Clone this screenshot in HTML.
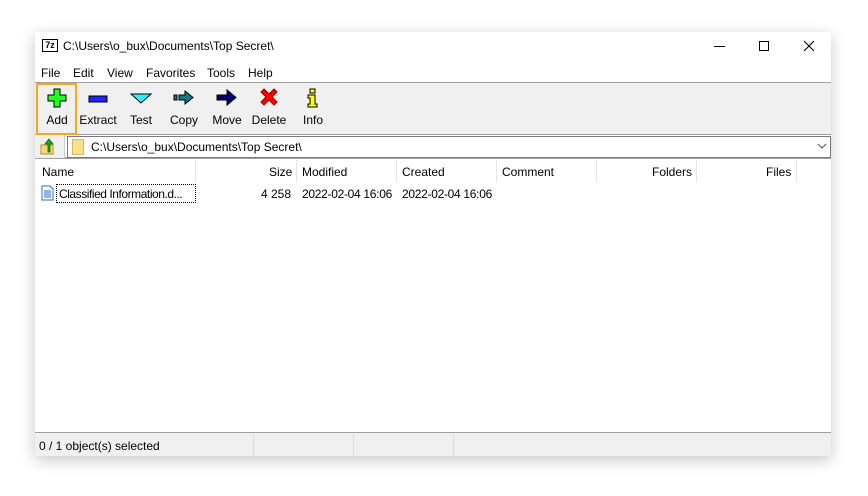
<!DOCTYPE html>
<html><head><meta charset="utf-8"><style>
*{margin:0;padding:0;box-sizing:border-box}
body{width:868px;height:496px;background:#fff;font-family:"Liberation Sans",sans-serif;font-size:12px;color:#000;position:relative;overflow:hidden;white-space:nowrap}
.win{position:absolute;left:35px;top:32px;width:796px;height:424px;background:#fff;box-shadow:0 4px 14px rgba(0,0,0,0.22)}
.abs{position:absolute}
.menu span{position:absolute;top:34px}
.tb{position:absolute;left:0;top:50px;width:796px;height:53px;background:#f0f0f0;border-top:1px solid #a0a0a0;border-bottom:1px solid #a0a0a0}
.btn{position:absolute;top:0;text-align:center;height:50px}
.btn svg{position:absolute;top:5px}
.btn span{position:absolute;top:30px;left:-5px;right:-5px;text-align:center}
.hdr span{position:absolute;top:133px}
.sep{position:absolute;top:128px;width:1px;height:22px;background:#e5e5e5}
</style></head><body>
<div class="win">
 <div class="abs" style="left:7px;top:7px;width:16px;height:13px;border:1.5px solid #000;font:bold 9px 'Liberation Sans',sans-serif;line-height:10px;text-align:center">7z</div>
 <div class="abs" style="left:28px;top:7px">C:\Users\o_bux\Documents\Top Secret\</div>
 <div class="abs" style="left:679px;top:14px;width:11px;height:1px;background:#000"></div>
 <div class="abs" style="left:724px;top:9px;width:10px;height:10px;border:1px solid #000"></div>
 <svg class="abs" style="left:768px;top:8px" width="12" height="12"><path d="M1 1L11 11M11 1L1 11" stroke="#000" stroke-width="1.1"/></svg>
 <div class="menu"><span style="left:6px">File</span><span style="left:38px">Edit</span><span style="left:72px">View</span><span style="left:111px">Favorites</span><span style="left:172px">Tools</span><span style="left:213px">Help</span></div>
 <div class="tb">
  <div class="abs" style="left:1px;top:0px;width:41px;height:52px;border:2px solid #f5a81c"></div>
  <div class="btn" style="left:2px;width:40px"><svg style="left:10px" width="20" height="20"><path d="M7 1h6v6h6v6h-6v6H7v-6H1V7h6z" fill="#2f2" stroke="#000" stroke-width="1"/></svg><span>Add</span></div>
  <div class="btn" style="left:43px;width:40px"><svg style="left:10px" width="20" height="20"><rect x="1" y="8" width="18" height="6" fill="#22f" stroke="#000"/></svg><span>Extract</span></div>
  <div class="btn" style="left:86px;width:40px"><svg style="left:9px" width="22" height="20"><path d="M1 6h20l-10 9z" fill="#3ef" stroke="#000"/></svg><span>Test</span></div>
  <div class="btn" style="left:129px;width:40px"><svg style="left:9px" width="22" height="20"><path d="M1 7h3v5H1zM6 7h6V3l8 6.5-8 6.5v-4H6z" fill="#178" stroke="#000"/></svg><span>Copy</span></div>
  <div class="btn" style="left:172px;width:40px"><svg style="left:9px" width="22" height="20"><path d="M1 7h10V2l9 7.5-9 7.5v-5H1z" fill="#006" stroke="#000"/></svg><span>Move</span></div>
  <div class="btn" style="left:214px;width:40px"><svg style="left:10px" width="20" height="20"><path d="M2 4l3-3 5 5 5-5 3 3-5 5 5 5-3 3-5-5-5 5-3-3 5-5z" fill="#f00" stroke="#900"/></svg><span>Delete</span></div>
  <div class="btn" style="left:258px;width:40px"><svg style="left:13px" width="14" height="20"><rect x="4" y="1" width="5" height="4" fill="#ff0" stroke="#000"/><path d="M2 7h7v9h2v3H2v-3h2v-6H2z" fill="#ff0" stroke="#000"/></svg><span>Info</span></div>
 </div>
 <div class="abs" style="left:0;top:103px;width:796px;height:24px;background:#fff;border-bottom:2px solid #a0a0a0"></div>
 <div class="abs" style="left:0;top:103px;width:30px;height:23px;background:#f0f0f0;border-right:1px solid #ccc"></div>
 <svg class="abs" style="left:4px;top:105px" width="18" height="18"><path d="M2 8h12v9H2z" fill="#f7d97a" stroke="#b89020"/><path d="M9 15V7H6l4-5 4 5h-3v8z" fill="#2a2" stroke="#060" stroke-width=".8"/></svg>
 <div class="abs" style="left:32px;top:104px;width:764px;height:22px;border:1px solid #7a7a7a;background:#fff"></div>
 <div class="abs" style="left:37px;top:107px;width:12px;height:16px;background:#fbe08a;border:1px solid #d8b860"></div>
 <div class="abs" style="left:56px;top:108px">C:\Users\o_bux\Documents\Top Secret\</div>
 <svg class="abs" style="left:782px;top:111px" width="10" height="6"><path d="M1 1l4 4 4-4" fill="none" stroke="#555"/></svg>
 <div class="hdr"><span style="left:7px">Name</span><span style="left:234px">Size</span><span style="left:267px">Modified</span><span style="left:367px">Created</span><span style="left:467px">Comment</span><span style="left:617px">Folders</span><span style="left:731px">Files</span></div>
 <div class="sep" style="left:160px"></div><div class="sep" style="left:261px"></div><div class="sep" style="left:361px"></div><div class="sep" style="left:461px"></div><div class="sep" style="left:561px"></div><div class="sep" style="left:661px"></div><div class="sep" style="left:761px"></div>
 <svg class="abs" style="left:6px;top:153px" width="13" height="16"><path d="M1 1h8l3 3v11H1z" fill="#fff" stroke="#2a6fc0"/><path d="M3 6h7M3 8h7M3 10h7M3 12h7" stroke="#2a6fc0"/></svg>
 <div class="abs" style="left:21px;top:152px;width:140px;height:19px;border:1px dotted #000;padding:2px 2px;font-size:12px;letter-spacing:-0.45px;overflow:hidden">Classified Information.d...</div>
 <div class="abs" style="left:226px;top:155px">4 258</div>
 <div class="abs" style="left:267px;top:155px;letter-spacing:-0.3px">2022-02-04 16:06</div>
 <div class="abs" style="left:367px;top:155px;letter-spacing:-0.3px">2022-02-04 16:06</div>
 <div class="abs" style="left:0;top:400px;width:796px;height:24px;background:#f0f0f0;border-top:1px solid #a0a0a0"></div>
 <div class="abs" style="left:4px;top:407px">0 / 1 object(s) selected</div>
 <div class="abs" style="left:218px;top:402px;width:1px;height:22px;background:#dcdcdc"></div>
 <div class="abs" style="left:318px;top:402px;width:1px;height:22px;background:#dcdcdc"></div>
 <div class="abs" style="left:418px;top:402px;width:1px;height:22px;background:#dcdcdc"></div>
</div>
</body></html>
